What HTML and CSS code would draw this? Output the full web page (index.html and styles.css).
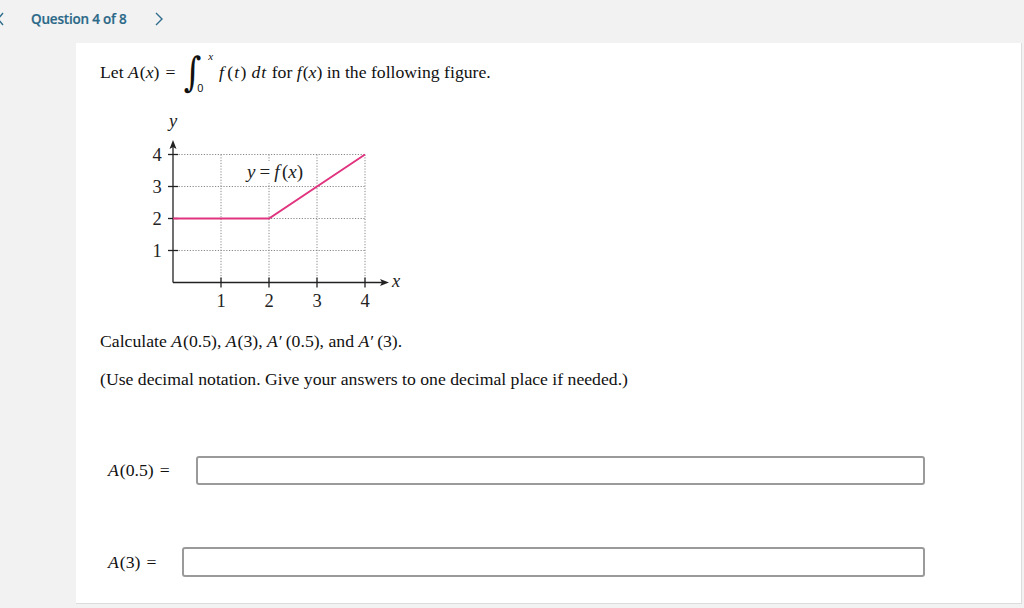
FILE: index.html
```html
<!DOCTYPE html>
<html>
<head>
<meta charset="utf-8">
<link rel="stylesheet" href="styles.css">
</head>
<body>
<div class="topbar">
  <svg class="chev chev-left" width="8" height="14" viewBox="0 0 8 14"><polyline points="6,1 1,7 6,13" fill="none" stroke="#2f6d8c" stroke-width="1.4"/></svg>
  <span class="qtitle">Question 4 of 8</span>
  <svg class="chev chev-right" width="8" height="14" viewBox="0 0 8 14"><polyline points="1,1 7,7 1,13" fill="none" stroke="#2f6d8c" stroke-width="1.4"/></svg>
</div>
<div class="card">
  <p class="line1">Let <i class="m">A</i>(<i>x</i>)<span class="eq">=</span><span class="int"><span class="int-sign">∫</span><span class="lims"><span class="up"><i>x</i></span><span class="lo">0</span></span></span><span class="ft"><i class="m">f</i>(<i>t</i>)</span><i class="dt">dt</i> for <i class="m">f</i>(<i>x</i>) in the following figure.</p>
  <svg class="graph" width="280" height="205" viewBox="0 0 280 205">
    <g stroke="#888" stroke-width="1" stroke-dasharray="1.2,1.6" fill="none">
      <line x1="33" y1="45.5" x2="225" y2="45.5"/>
      <line x1="33" y1="77.5" x2="225" y2="77.5"/>
      <line x1="33" y1="109.5" x2="225" y2="109.5"/>
      <line x1="33" y1="141.5" x2="225" y2="141.5"/>
      <line x1="81" y1="45.5" x2="81" y2="173.5"/>
      <line x1="129" y1="45.5" x2="129" y2="173.5"/>
      <line x1="177" y1="45.5" x2="177" y2="173.5"/>
      <line x1="225" y1="45.5" x2="225" y2="173.5"/>
    </g>
    <rect x="104" y="52" width="70" height="22" fill="#fff"/>
    <g stroke="#222" stroke-width="1.3" fill="none">
      <line x1="33" y1="173.5" x2="244" y2="173.5"/>
      <line x1="33" y1="173.5" x2="33" y2="36"/>
      <line x1="28" y1="45.5" x2="38" y2="45.5"/>
      <line x1="28" y1="77.5" x2="38" y2="77.5"/>
      <line x1="28" y1="109.5" x2="38" y2="109.5"/>
      <line x1="28" y1="141.5" x2="38" y2="141.5"/>
      <line x1="81" y1="168.5" x2="81" y2="178.5"/>
      <line x1="129" y1="168.5" x2="129" y2="178.5"/>
      <line x1="177" y1="168.5" x2="177" y2="178.5"/>
      <line x1="225" y1="168.5" x2="225" y2="178.5"/>
    </g>
    <polygon points="33,31 29.5,40 33,38 36.5,40" fill="#222"/>
    <polygon points="249,173.5 240,170 242,173.5 240,177" fill="#222"/>
    <polyline points="33,109.5 129,109.5 225,45.5" fill="none" stroke="#e0347f" stroke-width="2"/>
    <g class="glabel" font-size="18.5">
      <text x="17" y="51.5" text-anchor="middle">4</text>
      <text x="17" y="83.5" text-anchor="middle">3</text>
      <text x="17" y="115.5" text-anchor="middle">2</text>
      <text x="17" y="147.5" text-anchor="middle">1</text>
      <text x="81" y="198" text-anchor="middle">1</text>
      <text x="129" y="198" text-anchor="middle">2</text>
      <text x="177" y="198" text-anchor="middle">3</text>
      <text x="225" y="198" text-anchor="middle">4</text>
      <text x="33" y="18" text-anchor="middle" font-style="italic">y</text>
      <text x="256" y="178" text-anchor="middle" font-style="italic">x</text>
      <text x="107" y="69" font-size="19"><tspan font-style="italic">y</tspan><tspan dx="4">=</tspan><tspan dx="4" font-style="italic">f</tspan><tspan dx="2.5">(</tspan><tspan font-style="italic">x</tspan>)</text>
    </g>
  </svg>
  <p class="calc">Calculate <i class="m">A</i>(0.5), <i class="m">A</i>(3), <i class="m">A</i><span class="pr">′</span>(0.5), and <i class="m">A</i><span class="pr">′</span>(3).</p>
  <p class="note">(Use decimal notation. Give your answers to one decimal place if needed.)</p>
  <div class="row row1">
    <span class="lbl"><i class="m">A</i>(0.5)<span class="eq">=</span></span>
    <input class="ans" type="text">
  </div>
  <div class="row row2">
    <span class="lbl"><i class="m">A</i>(3)<span class="eq">=</span></span>
    <input class="ans ans2" type="text">
  </div>
</div>
</body>
</html>
```

FILE: styles.css
```css
html, body {
  margin: 0;
  padding: 0;
}
body {
  background: #f2f2f2;
  width: 1024px;
  height: 608px;
  overflow: hidden;
  font-family: "Liberation Serif", "Times New Roman", serif;
  color: #111;
}
.topbar {
  height: 43px;
  box-sizing: border-box;
  padding-bottom: 6px;
  display: flex;
  align-items: center;
}
.chev-left {
  margin-left: -3px;
}
.qtitle {
  margin-left: 26px;
  font-family: "Open Sans", "Noto Sans", sans-serif;
  font-weight: 600;
  font-size: 13.5px;
  color: #2a6888;
  letter-spacing: -0.2px;
  -webkit-text-stroke: 0.2px #2a6888;
}
.chev-right {
  margin-left: 28px;
}
.card {
  margin-left: 76px;
  width: 946px;
  height: 561px;
  box-sizing: border-box;
  background: #fff;
  border-right: 1px solid #dcdcdc;
  border-bottom: 1px solid #dcdcdc;
  font-size: 17.7px;
  line-height: 1.15;
  padding-left: 24px;
  padding-right: 96px;
  overflow: hidden;
}
p {
  margin: 0;
}
.m {
  padding-right: 1px;
}
.eq {
  margin: 0 5px 0 6px;
}
.pr {
  margin: 0 3px 0 0;
}
.line1 {
  padding-top: 6px;
  height: 46px;
  display: flex;
  align-items: center;
  white-space: pre;
}
.int {
  display: inline-flex;
  align-items: stretch;
  margin: 0 3px 0 3px;
  height: 46px;
}
.int-sign {
  font-family: "DejaVu Serif", serif;
  font-size: 34px;
  line-height: 46px;
  transform: scaleY(1.2);
}
.lims {
  display: flex;
  flex-direction: column;
  justify-content: space-between;
  align-items: flex-start;
  font-size: 11px;
  line-height: 12px;
}
.up {
  margin-left: 7px;
  margin-top: 1px;
  font-family: "Liberation Serif", serif;
}
.lo {
  margin-left: -4px;
  margin-bottom: 1px;
  font-family: "Liberation Sans", Arial, sans-serif;
}
.ft {
  margin-left: 3px;
  letter-spacing: 1.2px;
}
.ft .m {
  padding-right: 2px;
}
.dt {
  margin-left: 4px;
  letter-spacing: 1px;
}
.graph {
  display: block;
  margin-left: 40px;
  margin-top: 14px;
}
.glabel text {
  font-family: "Liberation Serif", serif;
  fill: #222;
}
.calc {
  margin-top: 17px;
}
.note {
  margin-top: 18px;
}
.row {
  display: flex;
  align-items: center;
  padding-left: 8px;
}
.lbl {
  margin-right: 21px;
  white-space: nowrap;
}
.ans {
  flex: 1;
  height: 29px;
  box-sizing: border-box;
  border: 2px solid #9a9a9a;
  border-radius: 3px;
  background: #fff;
  padding: 0;
  margin: 0;
}
.row1 {
  margin-top: 66px;
}
.row2 {
  margin-top: 62px;
}
.ans2 {
  height: 30px;
}
```
